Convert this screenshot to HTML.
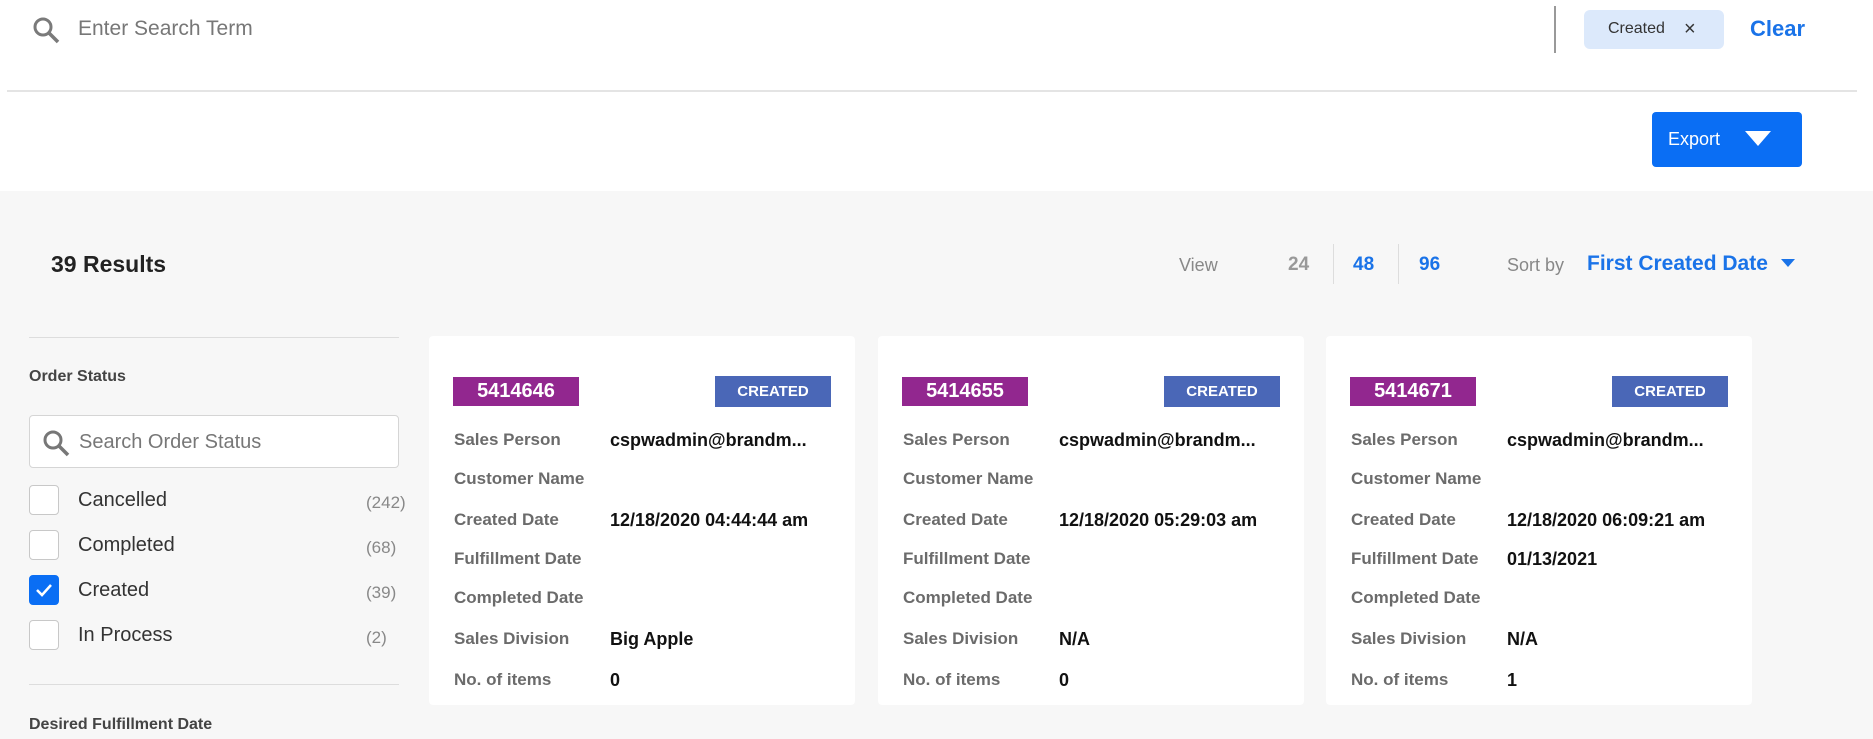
<!DOCTYPE html>
<html><head><meta charset="utf-8"><style>
*{margin:0;padding:0;box-sizing:border-box}
body{width:1873px;height:739px;overflow:hidden;background:#fff;font-family:"Liberation Sans",sans-serif;position:relative}
.a{position:absolute;white-space:nowrap}
.gray{position:absolute;left:0;top:191px;width:1873px;height:548px;background:#f7f7f7}
.card{position:absolute;top:336px;width:426px;height:369px;background:#fff;border-radius:4px}
.num{position:absolute;left:24px;top:41px;width:126px;height:29px;background:#92278f;color:#fff;font-weight:bold;font-size:20px;text-align:center;line-height:29px}
.st{position:absolute;left:286px;top:40px;width:116px;height:31px;background:#4a67b7;color:#fff;font-weight:bold;font-size:15px;text-align:center;line-height:31px}
.lb{position:absolute;left:25px;font-size:17px;color:#6b6b6b;font-weight:bold;line-height:20px}
.vl{position:absolute;left:181px;font-size:18px;color:#111;font-weight:bold;line-height:20px}
.cb{position:absolute;left:29px;width:30px;height:30px;border:1px solid #c8c8c8;border-radius:4px;background:#fff}
.cl{position:absolute;left:78px;font-size:20px;color:#333;line-height:30px}
.ct{position:absolute;left:366px;font-size:17px;color:#888;line-height:30px}
</style></head><body>
<svg class="a" style="left:32px;top:16px" width="30" height="28" viewBox="0 0 30 28"><circle cx="11" cy="11" r="8" fill="none" stroke="#7a7a7a" stroke-width="3"/><line x1="17" y1="17" x2="26" y2="26" stroke="#7a7a7a" stroke-width="3.5"/></svg>
<div class="a" style="left:78px;top:16px;font-size:21px;color:#777;line-height:26px">Enter Search Term</div>
<div class="a" style="left:1554px;top:6px;width:2px;height:47px;background:#999"></div>
<div class="a" style="left:1584px;top:10px;width:140px;height:39px;background:#dce9fb;border-radius:6px"></div>
<div class="a" style="left:1608px;top:18px;font-size:16px;color:#333;line-height:22px">Created</div>
<div class="a" style="left:1684px;top:18px;font-size:20px;color:#333;line-height:22px">×</div>
<div class="a" style="left:1750px;top:15px;font-size:22px;color:#1a73e8;font-weight:bold;line-height:28px">Clear</div>
<div class="a" style="left:7px;top:90px;width:1850px;height:2px;background:#e4e4e4"></div>
<div class="a" style="left:1652px;top:112px;width:150px;height:55px;background:#0a6ef4;border-radius:4px"></div>
<div class="a" style="left:1668px;top:127px;font-size:18px;color:#fff;line-height:24px">Export</div>
<svg class="a" style="left:1745px;top:131px" width="26" height="16"><polygon points="0,0 26,0 13,15" fill="#fff"/></svg>
<div class="gray"></div>
<div class="a" style="left:51px;top:251px;font-size:23px;font-weight:bold;color:#222;line-height:26px">39 Results</div>
<div class="a" style="left:1179px;top:253px;font-size:18px;color:#888;line-height:24px">View</div>
<div class="a" style="left:1288px;top:253px;font-size:19px;color:#999;font-weight:bold;line-height:24px">24</div>
<div class="a" style="left:1333px;top:244px;width:1px;height:40px;background:#ddd"></div>
<div class="a" style="left:1353px;top:253px;font-size:19px;color:#1a73e8;font-weight:bold;line-height:24px">48</div>
<div class="a" style="left:1398px;top:244px;width:1px;height:40px;background:#ddd"></div>
<div class="a" style="left:1419px;top:253px;font-size:19px;color:#1a73e8;font-weight:bold;line-height:24px">96</div>
<div class="a" style="left:1507px;top:253px;font-size:18px;color:#888;line-height:24px">Sort by</div>
<div class="a" style="left:1587px;top:251px;font-size:21px;color:#1a73e8;font-weight:bold;line-height:26px">First Created Date</div>
<svg class="a" style="left:1781px;top:259px" width="14" height="9"><polygon points="0,0 14,0 7,8" fill="#1a73e8"/></svg>
<div class="a" style="left:29px;top:337px;width:370px;height:1px;background:#ddd"></div>
<div class="a" style="left:29px;top:366px;font-size:16px;font-weight:bold;color:#444;line-height:22px">Order Status</div>
<div class="a" style="left:29px;top:415px;width:370px;height:53px;background:#fff;border:1px solid #d5d5d5;border-radius:4px"></div>
<svg class="a" style="left:41px;top:428px" width="30" height="30" viewBox="0 0 30 30"><circle cx="12" cy="12" r="8" fill="none" stroke="#777" stroke-width="3"/><line x1="18" y1="18" x2="27" y2="27" stroke="#777" stroke-width="3.5"/></svg>
<div class="a" style="left:79px;top:429px;font-size:20px;color:#777;line-height:26px">Search Order Status</div>
<div class="cb" style="top:485px"></div><div class="cl" style="top:485px">Cancelled</div><div class="ct" style="top:488px">(242)</div>
<div class="cb" style="top:530px"></div><div class="cl" style="top:530px">Completed</div><div class="ct" style="top:533px">(68)</div>
<div class="cb" style="top:575px;background:#0a6ef4;border-color:#0a6ef4"></div>
<svg class="a" style="left:35px;top:582px" width="18" height="16"><polyline points="2,8 7,13 16,3" fill="none" stroke="#fff" stroke-width="2.5"/></svg>
<div class="cl" style="top:575px">Created</div><div class="ct" style="top:578px">(39)</div>
<div class="cb" style="top:620px"></div><div class="cl" style="top:620px">In Process</div><div class="ct" style="top:623px">(2)</div>
<div class="a" style="left:29px;top:684px;width:370px;height:1px;background:#ddd"></div>
<div class="a" style="left:29px;top:714px;font-size:16px;font-weight:bold;color:#444;line-height:22px">Desired Fulfillment Date</div>

<div class="card" style="left:429px">
<div class="num">5414646</div><div class="st">CREATED</div>
<div class="lb" style="top:94px">Sales Person</div><div class="vl" style="top:94px">cspwadmin@brandm...</div>
<div class="lb" style="top:133px">Customer Name</div>
<div class="lb" style="top:174px">Created Date</div><div class="vl" style="top:174px">12/18/2020 04:44:44 am</div>
<div class="lb" style="top:213px">Fulfillment Date</div>
<div class="lb" style="top:252px">Completed Date</div>
<div class="lb" style="top:293px">Sales Division</div><div class="vl" style="top:293px">Big Apple</div>
<div class="lb" style="top:334px">No. of items</div><div class="vl" style="top:334px">0</div>
</div>
<div class="card" style="left:878px">
<div class="num">5414655</div><div class="st">CREATED</div>
<div class="lb" style="top:94px">Sales Person</div><div class="vl" style="top:94px">cspwadmin@brandm...</div>
<div class="lb" style="top:133px">Customer Name</div>
<div class="lb" style="top:174px">Created Date</div><div class="vl" style="top:174px">12/18/2020 05:29:03 am</div>
<div class="lb" style="top:213px">Fulfillment Date</div>
<div class="lb" style="top:252px">Completed Date</div>
<div class="lb" style="top:293px">Sales Division</div><div class="vl" style="top:293px">N/A</div>
<div class="lb" style="top:334px">No. of items</div><div class="vl" style="top:334px">0</div>
</div>
<div class="card" style="left:1326px">
<div class="num">5414671</div><div class="st">CREATED</div>
<div class="lb" style="top:94px">Sales Person</div><div class="vl" style="top:94px">cspwadmin@brandm...</div>
<div class="lb" style="top:133px">Customer Name</div>
<div class="lb" style="top:174px">Created Date</div><div class="vl" style="top:174px">12/18/2020 06:09:21 am</div>
<div class="lb" style="top:213px">Fulfillment Date</div><div class="vl" style="top:213px">01/13/2021</div>
<div class="lb" style="top:252px">Completed Date</div>
<div class="lb" style="top:293px">Sales Division</div><div class="vl" style="top:293px">N/A</div>
<div class="lb" style="top:334px">No. of items</div><div class="vl" style="top:334px">1</div>
</div>
</body></html>
